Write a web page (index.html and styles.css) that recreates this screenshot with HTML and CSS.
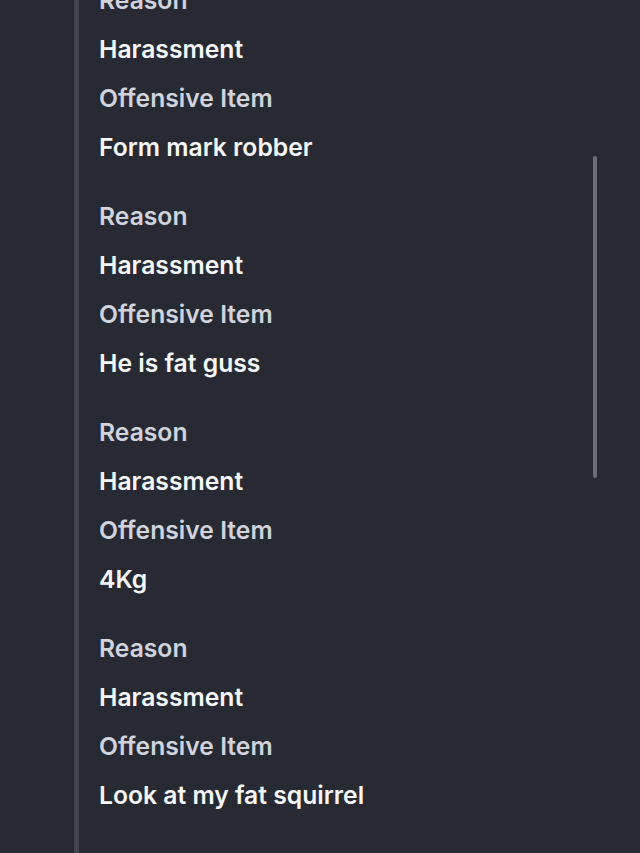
FILE: index.html
```html
<!DOCTYPE html>
<html>
<head>
  <title>Reports</title>
  <link rel="stylesheet" href="styles.css">
</head>
<body>
  <div class="panel">
    <div class="reports">
      <div class="report">
        <div class="label">Reason</div>
        <div class="value">Harassment</div>
        <div class="label">Offensive Item</div>
        <div class="value">Form mark robber</div>
      </div>
      <div class="report">
        <div class="label">Reason</div>
        <div class="value">Harassment</div>
        <div class="label">Offensive Item</div>
        <div class="value">He is fat guss</div>
      </div>
      <div class="report">
        <div class="label">Reason</div>
        <div class="value">Harassment</div>
        <div class="label">Offensive Item</div>
        <div class="value">4Kg</div>
      </div>
      <div class="report">
        <div class="label">Reason</div>
        <div class="value">Harassment</div>
        <div class="label">Offensive Item</div>
        <div class="value">Look at my fat squirrel</div>
      </div>
    </div>
    <div class="scroll-thumb"></div>
  </div>
</body>
</html>
```

FILE: styles.css
```css
html,
body {
  margin: 0;
  height: 100%;
  background-color: #272a32;
}

body {
  font-family: "Inter", "Open Sans", sans-serif;
  overflow: hidden;
}

.panel {
  position: relative;
  display: flow-root;
  box-sizing: border-box;
  margin-left: 74px;
  height: 100%;
  border-left: 5px solid #43464e;
  padding-left: 20px;
}

.reports {
  margin-top: -24px;
}

.report {
  margin-bottom: 20px;
}

.label,
.value {
  height: 49px;
  line-height: 49px;
  font-size: 24.7px;
  font-weight: 600;
  white-space: nowrap;
}

.label {
  color: #d0d3dc;
}

.value {
  color: #f5f6f8;
}

.scroll-thumb {
  position: absolute;
  top: 156px;
  left: 514px;
  width: 4px;
  height: 322px;
  border-radius: 2px;
  background-color: #6b6e78;
}
```
